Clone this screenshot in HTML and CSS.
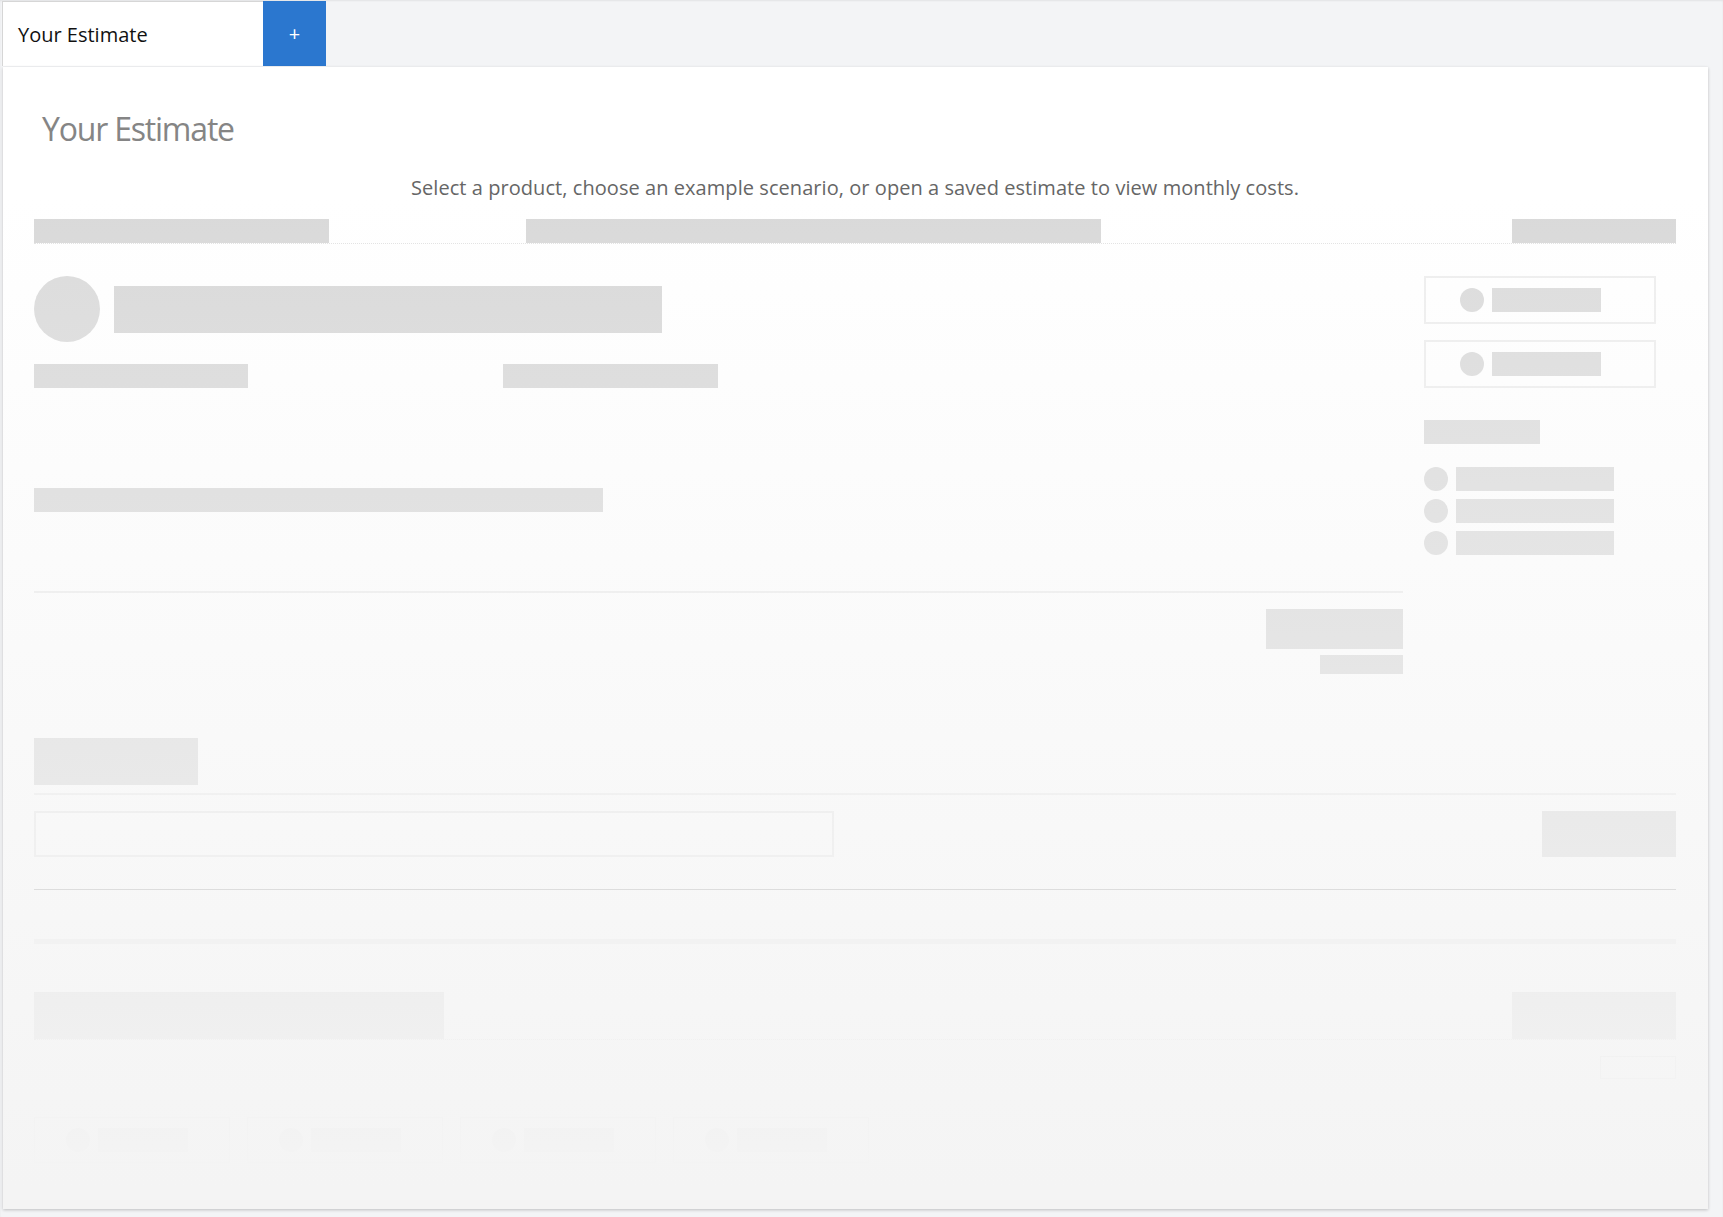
FILE: index.html
```html
<!DOCTYPE html>
<html lang="en">
<head>
<meta charset="utf-8">
<title>Your Estimate</title>
<link rel="stylesheet" href="styles.css">
</head>
<body>
<div class="tabs">
  <div class="tab">Your Estimate</div>
  <button class="tab-add" type="button">+</button>
</div>
<main class="card">
  <h1 class="title">Your Estimate</h1>
  <p class="subtitle">Select a product, choose an example scenario, or open a saved estimate to view monthly costs.</p>

  <div class="toprow">
    <div class="sk w295 h24"></div>
    <div class="sk w575 h24 ml197"></div>
    <div class="sk w164 h24 mlauto"></div>
  </div>

  <div class="main">
    <div class="left">
      <div class="header">
        <div class="circle c66"></div>
        <div class="sk w548 h47"></div>
      </div>
      <div class="meta">
        <div class="sk w214 h24"></div>
        <div class="sk w215 h24 ml255"></div>
      </div>
      <div class="sk w569 h24 desc"></div>
      <div class="line"></div>
      <div class="totals">
        <div class="sk w137 h40 soft"></div>
        <div class="sk w83 h19 soft small"></div>
      </div>
    </div>
    <aside class="right">
      <div class="opt"><div class="circle c24"></div><div class="sk w109 h24 lite"></div></div>
      <div class="opt second"><div class="circle c24"></div><div class="sk w109 h24 lite"></div></div>
      <div class="sk w116 h24 lite heading"></div>
      <ul class="list">
        <li><div class="circle c24"></div><div class="sk w158 h24 lite"></div></li>
        <li><div class="circle c24"></div><div class="sk w158 h24 lite"></div></li>
        <li><div class="circle c24"></div><div class="sk w158 h24 lite"></div></li>
      </ul>
    </aside>
  </div>

  <div class="sk w164 h47 soft section"></div>
  <div class="line thin-top"></div>
  <div class="inputrow">
    <div class="input"></div>
    <div class="sk w134 h46 soft mlauto"></div>
  </div>
  <div class="rule"></div>
  <div class="band"></div>
  <div class="sumrow">
    <div class="sk w410 h47 soft"></div>
    <div class="sk w164 h47 soft mlauto"></div>
  </div>
  <div class="tiny-wrap"><div class="tiny"></div></div>
  <div class="chips">
    <div class="chip"><div class="circle c24"></div><div class="sk w90 h24 lite"></div></div>
    <div class="chip"><div class="circle c24"></div><div class="sk w90 h24 lite"></div></div>
    <div class="chip"><div class="circle c24"></div><div class="sk w90 h24 lite"></div></div>
    <div class="chip"><div class="circle c24"></div><div class="sk w90 h24 lite"></div></div>
  </div>
</main>
</body>
</html>
```
FILE: styles.css
```css
* { box-sizing: border-box; }
html, body { margin: 0; padding: 0; }
body {
  background: #f3f4f6;
  font-family: "Open Sans", "Noto Sans", "Liberation Sans", sans-serif;
  width: 1723px;
  height: 1217px;
  overflow: hidden;
  box-shadow: inset 0 1px 2px rgba(0,0,0,0.07);
}

.tabs {
  display: flex;
  height: 67px;
  padding: 1px 0 0 2px;
}
.tab {
  width: 261px;
  height: 65px;
  background: #fff;
  border-top: 1px solid #d6d6d6;
  border-left: 1px solid #d6d6d6;
  display: flex;
  align-items: center;
  padding: 2px 0 0 15px;
  font-size: 20px;
  line-height: 28px;
  color: #111;
}
.tab-add {
  width: 63px;
  height: 65px;
  border: 0;
  margin: 0;
  padding: 0;
  background: #2b77cf;
  color: #fff;
  font-family: inherit;
  font-size: 20px;
  line-height: 28px;
}

.card {
  position: relative;
  display: block;
  margin-left: 3px;
  width: 1705px;
  height: 1142px;
  background: #fff;
  box-shadow: 0 1px 3px rgba(0,0,0,0.22);
  padding: 42px 32px 0 31px;
}
.card::after {
  content: "";
  position: absolute;
  inset: 0;
  pointer-events: none;
  background: linear-gradient(to bottom, rgba(244,244,244,0) 11.5%, rgba(244,244,244,1) 98%);
}

.title {
  margin: 0;
  padding-left: 8px;
  font-size: 32px;
  line-height: 40px;
  font-weight: 400;
  letter-spacing: -1.2px;
  color: #858585;
}
.subtitle {
  margin: 25px 0 0;
  text-align: center;
  font-size: 20px;
  line-height: 28px;
  letter-spacing: 0.06px;
  color: #666;
}

.sk { background: #d9d9d9; flex: none; }
.sk.lite { background: #dcdcdc; }
.sk.soft { background: #d9d9d9; }
.circle { background: #dbdbdb; border-radius: 50%; flex: none; }
.c66 { width: 66px; height: 66px; }
.c24 { width: 24px; height: 24px; }

.w83 { width: 83px; } .w90 { width: 90px; } .w109 { width: 109px; }
.w116 { width: 116px; } .w134 { width: 134px; } .w137 { width: 137px; }
.w158 { width: 158px; } .w164 { width: 164px; } .w214 { width: 214px; }
.w215 { width: 215px; } .w295 { width: 295px; } .w410 { width: 410px; }
.w548 { width: 548px; } .w569 { width: 569px; } .w575 { width: 575px; }
.h19 { height: 19px; } .h24 { height: 24px; } .h40 { height: 40px; }
.h46 { height: 46px; } .h47 { height: 47px; }
.ml197 { margin-left: 197px; } .ml255 { margin-left: 255px; }
.mlauto { margin-left: auto; }

.toprow {
  display: flex;
  margin-top: 17px;
  border-bottom: 1px dotted #e2e2e2;
}

.main {
  display: flex;
  gap: 21px;
  margin-top: 32px;
}
.left { width: 1369px; flex: none; }
.right { width: 232px; flex: none; }

.header { display: flex; align-items: center; gap: 14px; }
.meta { display: flex; margin-top: 22px; }
.desc { margin-top: 100px; }
.line { height: 2px; background: #ececec; margin-top: 79px; }
.totals {
  display: flex;
  flex-direction: column;
  align-items: flex-end;
  margin-top: 16px;
}
.totals .small { margin-top: 6px; }

.opt {
  height: 48px;
  border: 2px solid #eeeeee;
  display: flex;
  align-items: center;
  gap: 8px;
  padding-left: 34px;
}
.opt.second { margin-top: 16px; }
.heading { margin-top: 32px; }
.list {
  list-style: none;
  margin: 23px 0 0;
  padding: 0;
  display: flex;
  flex-direction: column;
  gap: 8px;
}
.list li { display: flex; gap: 8px; align-items: center; }

.section { margin-top: 64px; }
.line.thin-top { margin-top: 8px; width: 100%; }
.inputrow { display: flex; margin-top: 16px; }
.input {
  width: 800px;
  height: 46px;
  border: 2px solid #e8e8e8;
}
.rule { height: 1px; background: #a8a8a8; margin-top: 32px; }
.band { height: 5px; background: #ececec; margin-top: 49px; }
.sumrow {
  display: flex;
  margin-top: 48px;
  border-bottom: 1px dotted #d8d8d8;
}
.tiny-wrap { display: flex; justify-content: flex-end; margin-top: 16px; }
.tiny { width: 76px; height: 23px; border: 1px solid #e4e4e4; }
.chips { display: flex; gap: 17px; margin-top: 38px; }
.chip {
  width: 196px;
  height: 46px;
  border: 1px solid #e2e2e2;
  display: flex;
  align-items: center;
  gap: 8px;
  padding-left: 31px;
}
```
